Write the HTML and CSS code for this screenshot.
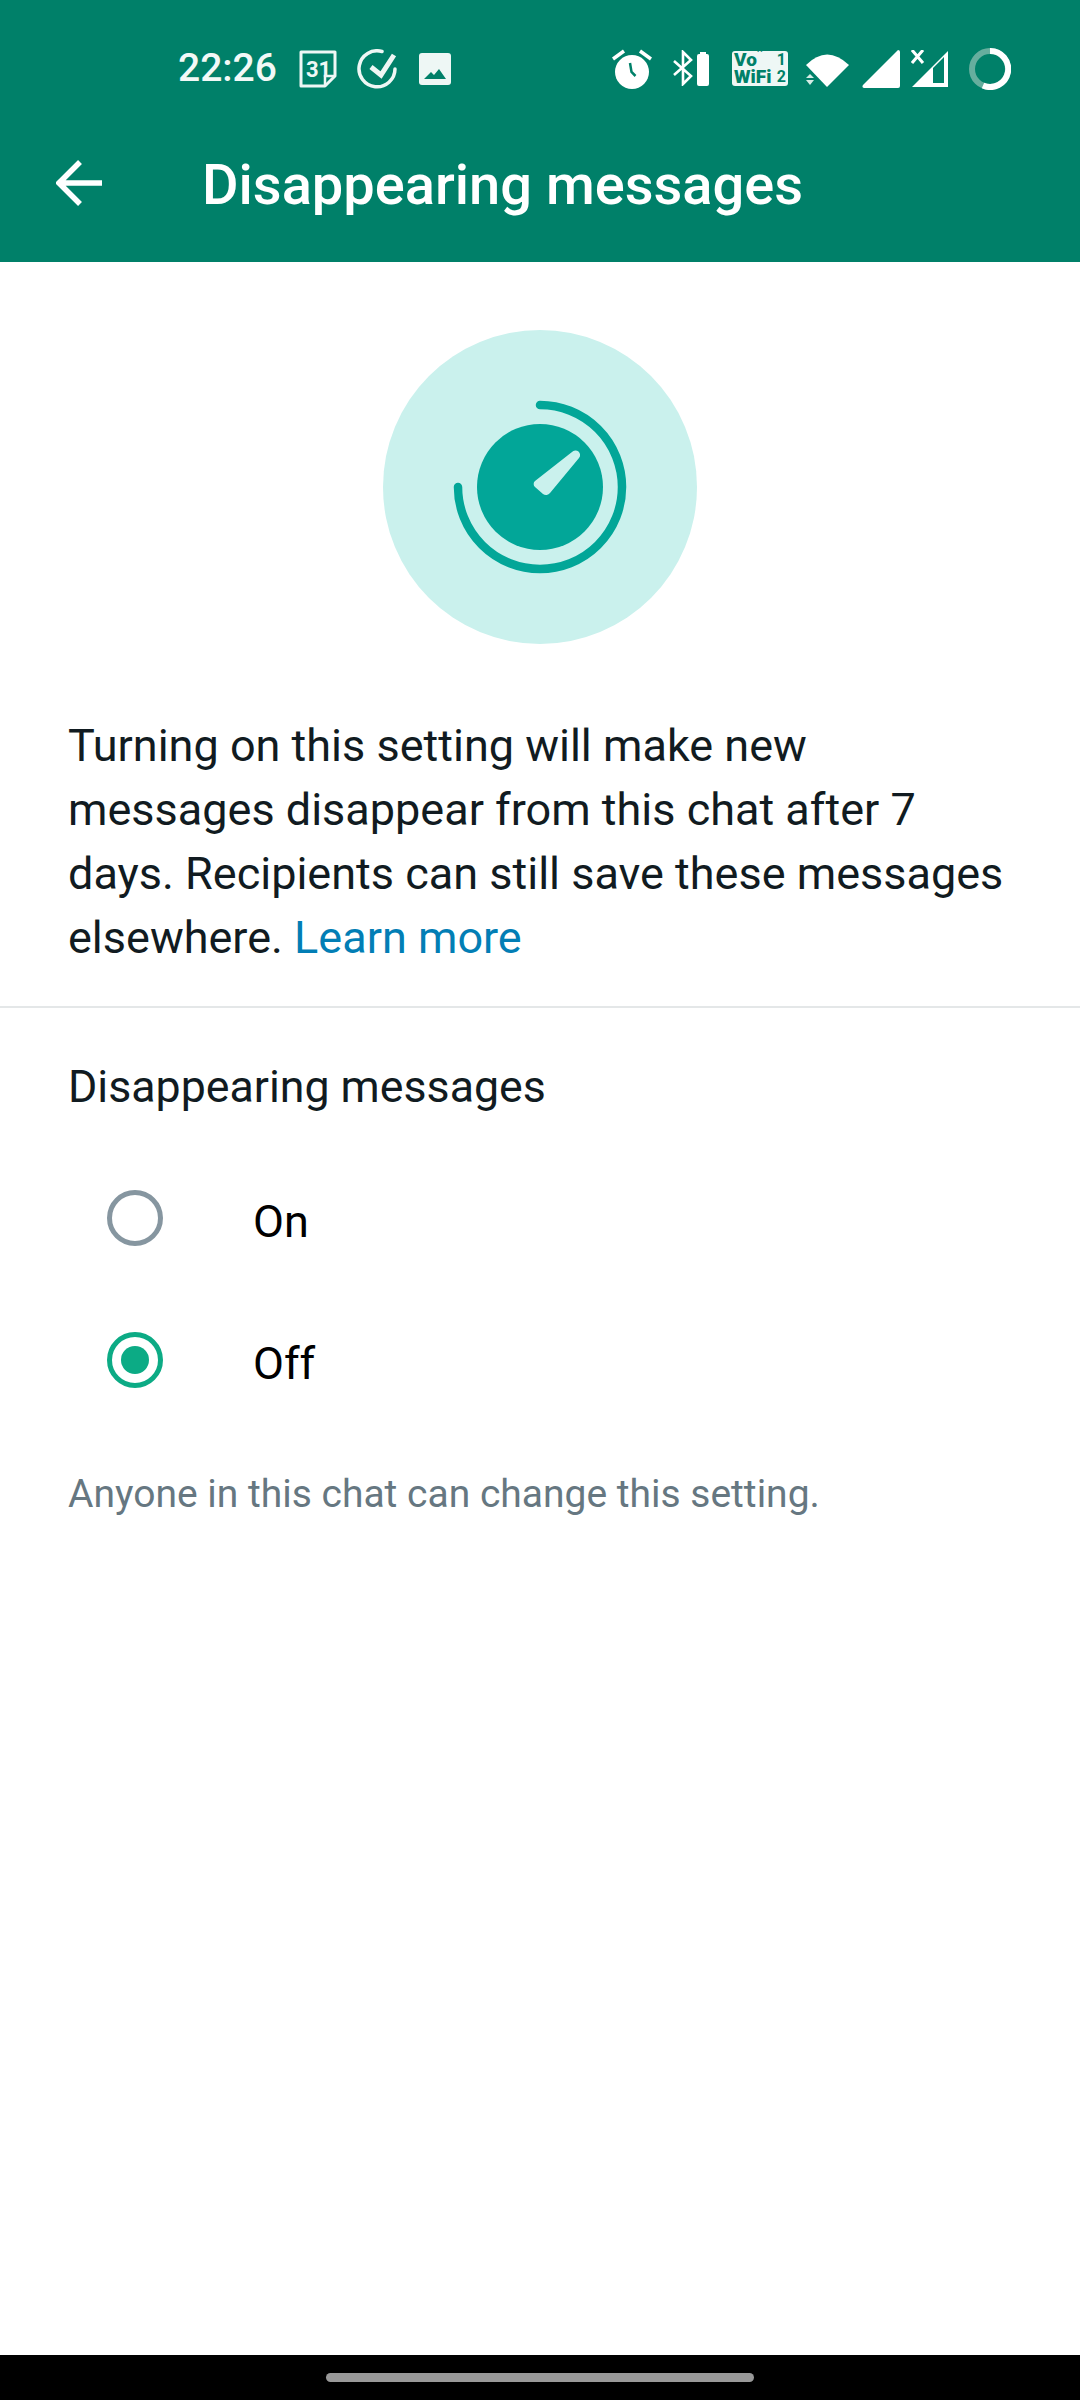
FILE: index.html
```html
<!DOCTYPE html>
<html lang="en">
<head>
  <meta charset="UTF-8">
  <meta name="viewport" content="width=device-width, initial-scale=1">
  <title>Disappearing messages</title>
  <link rel="stylesheet" href="styles.css">
</head>
<body>

<header>
  <div class="status-bar">
    <div class="status-left">
      <span class="time">22:26</span>
      <svg class="icon-cal" viewBox="0 0 38 38"><path d="M2 2h34v24l-10 10H2z" fill="none" stroke="#eef7f5" stroke-width="3" stroke-linejoin="round"/><path d="M36 26H26v10" fill="none" stroke="#eef7f5" stroke-width="2.5"/><text x="7" y="27" class="cal-num">31</text></svg>
      <svg class="icon-check" viewBox="0 0 40 40"><path d="M38 20A18 18 0 1 1 25 2.5" fill="none" stroke="#eef7f5" stroke-width="3.5" stroke-linecap="round"/><path d="M14 18l10 8L37 6" fill="none" stroke="#eef7f5" stroke-width="5"/></svg>
      <svg class="icon-image" viewBox="0 0 32 32"><path d="M3 0h26a3 3 0 0 1 3 3v26a3 3 0 0 1-3 3H3a3 3 0 0 1-3-3V3a3 3 0 0 1 3-3z" fill="#eef7f5"/><path d="M5 26l7-7 3 3 5-6 7 10z" fill="#008069"/></svg>
    </div>
    <div class="status-right">
      <svg class="icon-alarm" viewBox="0 0 40 40"><circle cx="20" cy="23" r="17" fill="#fff"/><path d="M1 10l11-8M39 10L28 2" stroke="#fff" stroke-width="3.5"/><path d="M18 14l1.5 9 4 4" fill="none" stroke="#008069" stroke-width="2.5"/></svg>
      <svg class="icon-bt" viewBox="0 0 37 36"><path d="M1 11l17 15-8 8V2l8 8L1 25" fill="none" stroke="#fff" stroke-width="2.6"/><path d="M27 4V2h6v2h1a2 2 0 0 1 2 2v28a2 2 0 0 1-2 2H26a2 2 0 0 1-2-2V6a2 2 0 0 1 2-2z" fill="#fff"/></svg>
      <div class="vowifi">
        <div class="vowifi-row"><span>Vo<sup>&#8217;&#8217;</sup></span><span class="sim">1</span></div>
        <div class="vowifi-row"><span>WiFi</span><span class="sim">2</span></div>
      </div>
      <svg class="icon-wifi" viewBox="0 0 43 35"><path d="M0 13Q21-8 43 13L21 35z" fill="#fff"/><path d="M0 26l4-4 4 4zM0 28l4 5 4-5z" fill="#d5ece6"/></svg>
      <svg class="icon-signal" viewBox="0 0 38 38"><path d="M36 0a2 2 0 0 1 2 2v34a2 2 0 0 1-2 2H2a2 2 0 0 1-1-3z" fill="#fff"/></svg>
      <svg class="icon-signal-x" viewBox="0 0 38 38"><path d="M37 1V37H1zM22 18V33H33V7z" fill="#fff" fill-rule="evenodd"/><path d="M1 0l11 13M12 0L1 13" stroke="#fff" stroke-width="3"/></svg>
      <svg class="icon-ring" viewBox="0 0 42 42"><circle cx="21" cy="21" r="18" fill="none" stroke="#66ae9e" stroke-width="6"/><path d="M21 3A18 18 0 1 1 14 37.5" fill="none" stroke="#fff" stroke-width="6"/></svg>
    </div>
  </div>
  <div class="toolbar">
    <svg class="icon-back" viewBox="0 0 46 46"><path d="M2 23h44M24 2L3 23l21 21" fill="none" stroke="#fff" stroke-width="5.5"/></svg>
    <h1>Disappearing messages</h1>
  </div>
</header>

<main>
  <div class="hero">
    <svg class="hero-icon" viewBox="0 0 314 314">
      <circle cx="157" cy="157" r="157" fill="#caf1ed"/>
      <circle cx="157" cy="157" r="63" fill="#02a698"/>
      <path d="M157 75A82 82 0 1 1 75 157" fill="none" stroke="#02a698" stroke-width="8.5" stroke-linecap="round"/>
      <path d="M189 122a4.5 4.5 0 0 1 7 6L167 163a5 5 0 0 1-7 1l-8-7a4 4 0 0 1 0-6z" fill="#caf1ed"/>
    </svg>
  </div>

  <p class="description">Turning on this setting will make new messages disappear from this chat after 7 days. Recipients can still save these messages elsewhere. <a href="#">Learn more</a></p>

  <section class="options">
    <h2>Disappearing messages</h2>
    <div class="option">
      <span class="radio"></span>
      <span class="option-label">On</span>
    </div>
    <div class="option">
      <span class="radio checked"></span>
      <span class="option-label">Off</span>
    </div>
    <p class="note">Anyone in this chat can change this setting.</p>
  </section>
</main>

<footer>
  <div class="home-bar"></div>
</footer>

</body>
</html>
```

FILE: styles.css
```css
* {
  margin: 0;
  padding: 0;
  box-sizing: border-box;
}

body {
  width: 1080px;
  height: 2400px;
  display: flex;
  flex-direction: column;
  font-family: Roboto, sans-serif;
  background-color: white;
  color: #111b21;
}

/* Header */
header {
  height: 262px;
  background-color: #008069;
  color: white;
}

.status-bar {
  height: 92px;
  padding: 48px 69px 0 178px;
  display: flex;
  justify-content: space-between;
  align-items: flex-start;
}

.status-left,
.status-right {
  display: flex;
  align-items: flex-start;
}

.time {
  width: 121px;
  font-size: 39px;
  font-weight: 500;
  line-height: 40px;
  color: #f2f9f7;
}

.icon-cal { width: 38px; height: 38px; margin-top: 2px; }
.icon-check { width: 40px; height: 40px; margin: 1px 0 0 20px; }
.icon-image { width: 32px; height: 32px; margin: 5px 0 0 22px; }

.cal-num {
  font-size: 22px;
  font-weight: 700;
  fill: #eef7f5;
}

.icon-alarm { width: 40px; height: 40px; margin-top: 1px; }
.icon-bt { width: 37px; height: 36px; margin: 2px 0 0 21px; }
.icon-signal { width: 38px; height: 38px; margin: 2px 0 0 13px; }
.icon-signal-x { width: 38px; height: 38px; margin: 2px 0 0 11px; }
.icon-wifi { width: 43px; height: 35px; margin: 4px 0 0 18px; }
.icon-ring { width: 42px; height: 42px; margin-left: 20px; }

.vowifi {
  width: 56px;
  height: 35px;
  margin: 3px 0 0 22px;
  padding: 0 2px;
  background-color: #eef7f5;
  border-radius: 3px;
  color: #008069;
  font-size: 19px;
  font-weight: 900;
  line-height: 17px;
}

.vowifi-row {
  display: flex;
  justify-content: space-between;
}

.vowifi sup {
  font-size: 14px;
  line-height: 0;
}

.vowifi .sim {
  font-size: 16px;
  font-weight: 700;
}

.toolbar {
  height: 170px;
  padding: 0 0 0 56px;
  display: flex;
  align-items: flex-start;
}

.icon-back {
  width: 46px;
  height: 46px;
  margin-top: 68px;
}

.toolbar h1 {
  margin: 60px 0 0 100px;
  font-size: 56px;
  font-weight: 500;
  line-height: 66px;
}

/* Content */
main {
  flex: 1;
}

.hero {
  padding: 68px 1px 0 0;
  display: flex;
  justify-content: center;
}

.hero-icon {
  width: 314px;
  height: 314px;
}

.description {
  padding: 70px 69px 0 68px;
  font-size: 45px;
  line-height: 64px;
  height: 364px;
  border-bottom: 2px solid #e4e7e8;
}

.description a {
  color: #027eb5;
  text-decoration: none;
}

.options {
  padding: 49px 69px 0 68px;
}

.options h2 {
  font-size: 44.7px;
  font-weight: 400;
  line-height: 60px;
  margin-bottom: 30px;
}

.option {
  height: 142px;
  padding-left: 39px;
  display: flex;
  align-items: center;
  gap: 90px;
  font-size: 45px;
  color: black;
}

.option-label {
  margin-top: 6px;
}

.radio {
  width: 56px;
  height: 56px;
  border: 5px solid #8696a0;
  border-radius: 50%;
  display: flex;
  align-items: center;
  justify-content: center;
}

.radio.checked {
  border-color: #0cab85;
}

.radio.checked::after {
  content: "";
  width: 28px;
  height: 28px;
  border-radius: 50%;
  background-color: #0cab85;
}

.note {
  margin-top: 38px;
  font-size: 39px;
  line-height: 50px;
  color: #667781;
}

/* Navigation bar */
footer {
  height: 45px;
  background-color: black;
  display: flex;
  justify-content: center;
  padding-top: 18px;
}

.home-bar {
  width: 428px;
  height: 9px;
  border-radius: 5px;
  background-color: #999;
}
```
